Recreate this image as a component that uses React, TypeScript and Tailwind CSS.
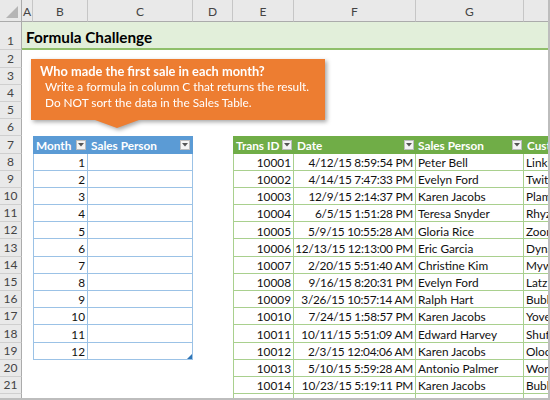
import React from "react";

const sales = [
  ["10001", "4/12/15 8:59:54 PM", "Peter Bell", "Linkbridge"],
  ["10002", "4/14/15 7:47:33 PM", "Evelyn Ford", "Twitterbeat"],
  ["10003", "12/9/15 2:14:37 PM", "Karen Jacobs", "Plambee"],
  ["10004", "6/5/15 1:51:28 PM", "Teresa Snyder", "Rhyzio"],
  ["10005", "5/9/15 10:55:28 AM", "Gloria Rice", "Zoonoodle"],
  ["10006", "12/13/15 12:13:00 PM", "Eric Garcia", "Dynabox"],
  ["10007", "2/20/15 5:51:40 AM", "Christine Kim", "Mywork"],
  ["10008", "9/16/15 8:20:31 PM", "Evelyn Ford", "Latz"],
  ["10009", "3/26/15 10:57:14 AM", "Ralph Hart", "Bubblebox"],
  ["10010", "7/24/15 1:58:57 PM", "Karen Jacobs", "Yoveo"],
  ["10011", "10/11/15 5:51:09 AM", "Edward Harvey", "Shufflester"],
  ["10012", "2/3/15 12:04:06 AM", "Karen Jacobs", "Oloo"],
  ["10013", "5/10/15 5:59:28 AM", "Antonio Palmer", "Wordware"],
  ["10014", "10/23/15 5:19:11 PM", "Karen Jacobs", "Bubbletube"],
  ["10015", "3/20/15 6:08:41 PM", "Peter Bell", "Zoomcast"],
];

const cols = ["A", "B", "C", "D", "E", "F", "G", "H"];
const rowNums = Array.from({ length: 22 }, (_, i) => i + 1);
const months = Array.from({ length: 12 }, (_, i) => i + 1);

function FilterButton() {
  return (
    <span className="flex h-[10px] w-[10px] shrink-0 items-center justify-center border border-[#bcbcbc] bg-[#f4f4f4]">
      <svg width="6" height="4" viewBox="0 0 6 4">
        <path d="M0 0h6L3 3.5z" fill="#555" />
      </svg>
    </span>
  );
}

function HeaderCell({ label, border }: { label: string; border: string }) {
  return (
    <div className={`flex items-center justify-between gap-[2px] whitespace-nowrap pl-[2px] pr-[2px] pt-[1px] font-bold text-white ${border}`}>
      <span>{label}</span>
      <FilterButton />
    </div>
  );
}

export default function App() {
  return (
    <div className="relative h-[400px] w-[550px] overflow-hidden border-b-2 border-r-2 border-[#bdbdbd] bg-white font-['Lato',sans-serif] text-[11.8px] text-[#111]">
      <div className="grid grid-cols-[22px_11px_55px_105px_40px_61px_122px_108px_100px] grid-rows-[22px_28.4px_repeat(21,17.2px)]">
        {/* corner */}
        <div className="relative col-start-1 row-start-1 border-b border-r border-[#ababab] bg-[#e9e9e9]">
          <svg className="absolute bottom-[3px] right-[3px]" width="12" height="12" viewBox="0 0 12 12">
            <path d="M12 0v12H0z" fill="#b5b5b5" />
          </svg>
        </div>

        {/* column headers */}
        {cols.map((c, i) => (
          <div
            key={c}
            className="row-start-1 flex items-center justify-center border-b border-r border-b-[#ababab] border-r-[#c6c6c6] bg-[#e9e9e9] pt-[2px] text-[12px] text-[#444]"
            style={{ gridColumnStart: i + 2 }}
          >
            {c}
          </div>
        ))}

        {/* row headers */}
        {rowNums.map((n) => (
          <div
            key={n}
            className="col-start-1 flex items-end justify-center border-b border-r border-b-[#cfcfcf] border-r-[#ababab] bg-[#e9e9e9] pb-[1px] text-[12px] leading-[15px] text-[#444]"
            style={{ gridRowStart: n + 1 }}
          >
            {n}
          </div>
        ))}

        {/* title row */}
        <div className="col-start-2 col-end-10 row-start-2 flex items-end border-b-2 border-[#8fbf6a] bg-[#e2efda] pb-[1px] pl-[4px] text-[15.3px] font-bold leading-[20px] text-black">
          Formula Challenge
        </div>

        {/* months table */}
        <div className="col-start-3 col-end-5 row-start-8 row-end-21 grid grid-cols-[55px_105px] grid-rows-[repeat(13,17.2px)]">
          <HeaderCell label="Month" border="bg-[#5b9bd5] border-l border-[#5b9bd5]" />
          <HeaderCell label="Sales Person" border="bg-[#5b9bd5] pl-[3px] border-r border-[#5b9bd5]" />
          {months.map((m) => (
            <React.Fragment key={m}>
              <div className="flex items-center justify-end border-b border-l border-r border-[#9bc2e6] pr-[2px] pt-[2px]">{m}</div>
              <div className="relative border-b border-r border-[#9bc2e6]">
                {m === 12 && (
                  <svg className="absolute bottom-0 right-0" width="5" height="5" viewBox="0 0 5 5">
                    <path d="M5 0v5H0z" fill="#2f75b5" />
                  </svg>
                )}
              </div>
            </React.Fragment>
          ))}
        </div>

        {/* sales table */}
        <div className="col-start-6 col-end-10 row-start-8 row-end-24 grid grid-cols-[61px_122px_108px_100px] grid-rows-[repeat(16,17.2px)]">
          <HeaderCell label="Trans ID" border="bg-[#70ad47] border-l border-[#70ad47]" />
          <HeaderCell label="Date" border="bg-[#70ad47] pl-[3px]" />
          <HeaderCell label="Sales Person" border="bg-[#70ad47] pl-[2px]" />
          <div className="flex items-center whitespace-nowrap bg-[#70ad47] pl-[3px] pt-[1px] font-bold text-white">Customer</div>
          {sales.map(([id, date, person, cust]) => (
            <React.Fragment key={id}>
              <div className="flex items-center justify-end whitespace-nowrap border-b border-l border-r border-[#a9d08e] pr-[2px] pt-[2px]">{id}</div>
              <div className="flex items-center justify-end whitespace-nowrap border-b border-r border-[#a9d08e] pr-[2px] pt-[2px] tracking-[-0.25px]">{date}</div>
              <div className="flex items-center whitespace-nowrap border-b border-r border-[#a9d08e] pl-[2px] pt-[2px]">{person}</div>
              <div className="flex items-center overflow-hidden whitespace-nowrap border-b border-[#a9d08e] pl-[2px] pt-[2px]">{cust}</div>
            </React.Fragment>
          ))}
        </div>
      </div>

      {/* callout */}
      <div className="absolute left-[31px] top-[59px] drop-shadow-[2px_2px_2px_rgba(0,0,0,0.35)]">
        <div className="relative h-[61px] w-[294px] bg-[#ed7d31] pl-[9px] pt-[4px] text-white">
          <div className="text-[12.8px] font-bold leading-[16px]">Who made the first sale in each month?</div>
          <div className="pl-[5px] text-[11.8px] leading-[16px]">Write a formula in column C that returns the result.</div>
          <div className="pl-[5px] text-[11.8px] leading-[16px]">Do NOT sort the data in the Sales Table.</div>
          <div className="absolute left-[64px] top-full h-0 w-0 border-l-[22px] border-r-[22px] border-t-[8px] border-l-transparent border-r-transparent border-t-[#ed7d31]" />
        </div>
      </div>
    </div>
  );
}
